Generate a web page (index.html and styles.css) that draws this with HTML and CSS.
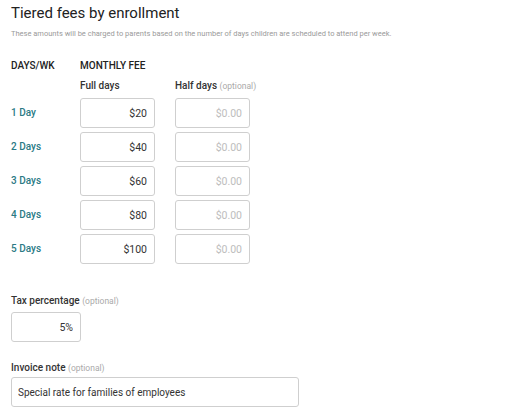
FILE: index.html
```html
<!DOCTYPE html>
<html lang="en">
<head>
  <meta charset="UTF-8">
  <meta name="viewport" content="width=device-width, initial-scale=1.0">
  <title>Tiered fees</title>
  <link rel="stylesheet" href="styles.css">
</head>
<body>
  <div class="fees">
    <h2 class="fees-title">Tiered fees by enrollment</h2>
    <p class="fees-desc">These amounts will be charged to parents based on the number of days children are scheduled to attend per week.</p>

    <!-- Fee table -->
    <div class="fee-table">
      <div class="col-head">DAYS/WK</div>
      <div class="col-head span-2">MONTHLY FEE</div>

      <div></div>
      <div class="sub-head">Full days</div>
      <div class="sub-head">Half days <span class="optional">(optional)</span></div>

      <div class="day-label">1 Day</div>
      <input class="fee-input" type="text" value="$20">
      <input class="fee-input" type="text" placeholder="$0.00">

      <div class="day-label">2 Days</div>
      <input class="fee-input" type="text" value="$40">
      <input class="fee-input" type="text" placeholder="$0.00">

      <div class="day-label">3 Days</div>
      <input class="fee-input" type="text" value="$60">
      <input class="fee-input" type="text" placeholder="$0.00">

      <div class="day-label">4 Days</div>
      <input class="fee-input" type="text" value="$80">
      <input class="fee-input" type="text" placeholder="$0.00">

      <div class="day-label">5 Days</div>
      <input class="fee-input" type="text" value="$100">
      <input class="fee-input" type="text" placeholder="$0.00">
    </div>

    <!-- Tax -->
    <div class="field tax-field">
      <label class="field-label">Tax percentage <span class="optional">(optional)</span></label>
      <input class="fee-input tax-input" type="text" value="5%">
    </div>

    <!-- Invoice note -->
    <div class="field note-field">
      <label class="field-label">Invoice note <span class="optional">(optional)</span></label>
      <input class="note-input" type="text" value="Special rate for families of employees">
    </div>
  </div>
</body>
</html>
```

FILE: styles.css
```css
body {
  margin: 0;
  font-family: Roboto, Arial, sans-serif;
  color: #222;
  background: #fff;
}

.fees {
  padding: 3px 0 0 11px;
}

.fees-title {
  margin: 0;
  font-size: 15px;
  font-weight: 400;
  line-height: 20px;
  color: #222;
}

.fees-desc {
  margin: 6px 0 0;
  font-size: 7.5px;
  line-height: 10px;
  color: #9a9a9a;
}

/* first two rows are headers, then one row per day count */
.fee-table {
  display: grid;
  grid-template-columns: 69px 95px 75px;
  grid-template-rows: 16px 15px;
  grid-auto-rows: 30px;
  row-gap: 4px;
  margin-top: 20px;
}

.col-head,
.sub-head {
  height: 14px;
  line-height: 14px;
  align-self: start;
  white-space: nowrap;
  font-size: 10px;
  font-weight: 500;
}

.col-head {
  color: #222;
}

.span-2 {
  grid-column: span 2;
}

.sub-head {
  color: #333;
}

.optional {
  font-size: 8.5px;
  font-weight: 400;
  color: #aaa;
}

.day-label {
  font-size: 10px;
  font-weight: 500;
  color: #2b7a85;
  line-height: 30px;
}

.fee-input {
  box-sizing: border-box;
  width: 75px;
  height: 30px;
  border: 1px solid #cfcfcf;
  border-radius: 3px;
  padding: 0 7px;
  font-family: Roboto, Arial, sans-serif;
  font-size: 10.5px;
  color: #333;
  text-align: right;
  background: #fff;
}

.fee-input::placeholder {
  color: #bdbdbd;
}

.field {
  display: flex;
  flex-direction: column;
}

.tax-field {
  margin-top: 31px;
}

.note-field {
  margin-top: 20px;
}

.field-label {
  font-size: 10px;
  font-weight: 500;
  color: #333;
  line-height: 12px;
  margin-bottom: 5px;
}

.note-field .field-label {
  margin-bottom: 3px;
}

.tax-input {
  width: 70px;
}

.note-input {
  box-sizing: border-box;
  width: 288px;
  height: 30px;
  border: 1px solid #cfcfcf;
  border-radius: 3px;
  padding: 0 6px;
  font-family: Roboto, Arial, sans-serif;
  font-size: 10px;
  color: #333;
  background: #fff;
}
```
